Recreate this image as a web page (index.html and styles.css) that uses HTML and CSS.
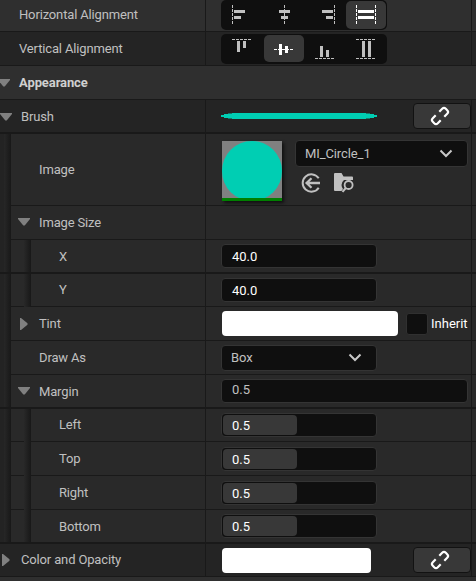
FILE: index.html
```html
<!DOCTYPE html>
<html lang="en">
<head>
<meta charset="utf-8">
<title>Details</title>
<link rel="stylesheet" href="styles.css">
</head>
<body>
<svg class="defs" width="0" height="0">
  <symbol id="link" viewBox="0 0 20 20">
    <g fill="none" stroke="#fff" stroke-width="2.200">
      <path d="M9.300 5.700 12.200 2.800Q14 1 15.800 2.800L17.200 4.200Q19 6 17.200 7.800L14.300 10.700"/>
      <path d="M10.700 14.300 7.800 17.200Q6 19 4.200 17.200L2.800 15.800Q1 14 2.800 12.200L5.700 9.300"/>
    </g>
  </symbol>
  <symbol id="chevron" viewBox="0 0 14 9">
    <path d="M1.500 1.500 7 7l5.500-5.500" fill="none" stroke="#c8c8c8" stroke-width="2"/>
  </symbol>
</svg>
<main class="details">
  <div class="row first">
    <div class="name">Horizontal Alignment</div>
    <div class="value">
      <div class="segments">
        <span class="seg"><svg width="20" height="20"><path class="dash" d="M.5 0V20"/><path d="M2 5h11v3H2zM2 11h7v3H2z"/></svg></span>
        <span class="seg"><svg width="20" height="20"><path class="dash" d="M10.500 0V20"/><path d="M5 5h11v3H5zM7 11h7v3H7z"/></svg></span>
        <span class="seg"><svg width="20" height="20"><path class="dash" d="M19.500 0V20"/><path d="M7 5h11v3H7zM11 11h7v3h-7z"/></svg></span>
        <span class="seg on"><svg width="20" height="20"><path class="dash" d="M.5 0V20M19.500 0V20"/><path d="M2 5h16v3H2zM2 11h16v3H2z"/></svg></span>
      </div>
    </div>
  </div>
  <div class="row dark">
    <div class="name">Vertical Alignment</div>
    <div class="value">
      <div class="segments">
        <span class="seg"><svg width="20" height="20"><path class="dash" d="M0 .5H20"/><path d="M5 2h3v11H5zM11 2h3v7h-3z"/></svg></span>
        <span class="seg on"><svg width="20" height="20"><path class="dash" d="M0 10.500H20"/><path d="M5 5h3v11H5zM11 7h3v7h-3z"/></svg></span>
        <span class="seg"><svg width="20" height="20"><path class="dash" d="M0 19.500H20"/><path d="M5 7h3v11H5zM11 11h3v7h-3z"/></svg></span>
        <span class="seg"><svg width="20" height="20"><path class="dash" d="M0 .5H20M0 19.500H20"/><path d="M6 2h3v16H6zM12 2h3v16h-3z"/></svg></span>
      </div>
    </div>
  </div>
  <div class="row category">
    <svg class="arrow down" width="12" height="8"><path d="M0 0h12v1L6.700 7.500H5.300L0 1z"/></svg>
    <div class="name">Appearance</div>
  </div>
  <div class="row dark thick l1">
    <svg class="arrow down" width="12" height="8"><path d="M0 0h12v1L6.700 7.500H5.300L0 1z"/></svg>
    <div class="name">Brush</div>
    <div class="value">
      <svg class="strip" width="156" height="6"><path d="M0 2H3V1H7V.5H11V0H145V.5H149V1H153V2H156V4H153V5H149V5.500H145V6H11V5.500H7V5H3V4H0z"/></svg>
      <span class="button"><svg width="20" height="20"><use href="#link"/></svg></span>
    </div>
  </div>
  <div class="row image l2">
    <i class="guide"></i>
    <div class="name">Image</div>
    <div class="value">
      <svg class="thumb" width="60" height="60"><path fill="#808080" d="M0 0h60v60H0z"/><circle cx="30" cy="30" r="30" fill="#00ceb3"/><path fill="#007f00" d="M0 57h60v3H0z"/></svg>
      <div class="asset">
        <div class="field combo wide"><span>MI_Circle_1</span><svg width="14" height="9"><use href="#chevron"/></svg></div>
        <div class="tools">
          <svg width="20" height="20"><g fill="none" stroke="#c0c0c0" stroke-width="2"><path d="M17.700 5.300A8.700 8.700 0 1 0 17.700 14.700"/><path stroke-width="2.300" d="M19 10H6M10.500 5.200 5.600 10l4.900 4.800"/></g></svg>
          <svg width="20" height="20"><path fill="#c0c0c0" d="M0 1Q0 0 1 0H7.500L9.500 3.500H18Q19 3.500 19 4.500V7H10Q7.500 9 7.500 12 7.500 14 9 16L7.500 18H1Q0 18 0 17z"/><circle cx="14.600" cy="12" r="4" fill="none" stroke="#c0c0c0" stroke-width="1.800"/><path d="M11.800 15 8.500 18.800" stroke="#c0c0c0" stroke-width="2"/></svg>
        </div>
      </div>
    </div>
  </div>
  <div class="row l2">
    <i class="guide"></i>
    <svg class="arrow down" width="12" height="8"><path d="M0 0h12v1L6.700 7.500H5.300L0 1z"/></svg>
    <div class="name">Image Size</div>
    <div class="value"></div>
  </div>
  <div class="row thick l3">
    <i class="guide"></i><i class="guide inner"></i>
    <div class="name">X</div>
    <div class="value"><div class="field num">40.0</div></div>
  </div>
  <div class="row short l3">
    <i class="guide"></i><i class="guide inner"></i>
    <div class="name">Y</div>
    <div class="value"><div class="field num">40.0</div></div>
  </div>
  <div class="row l2">
    <i class="guide"></i>
    <svg class="arrow right" width="8" height="12"><path d="M0 0h1L7.500 5.300V6.700L1 12H0z"/></svg>
    <div class="name">Tint</div>
    <div class="value"><div class="swatch tint"></div><span class="check"></span><span class="inherit">Inherit</span></div>
  </div>
  <div class="row l2">
    <i class="guide"></i>
    <div class="name">Draw As</div>
    <div class="value"><div class="field combo"><span>Box</span><svg width="14" height="9"><use href="#chevron"/></svg></div></div>
  </div>
  <div class="row thick l2">
    <i class="guide"></i>
    <svg class="arrow down" width="12" height="8"><path d="M0 0h12v1L6.700 7.500H5.300L0 1z"/></svg>
    <div class="name">Margin</div>
    <div class="value"><div class="field text">0.5</div></div>
  </div>
  <div class="row short l3">
    <i class="guide"></i><i class="guide inner"></i>
    <div class="name">Left</div>
    <div class="value"><div class="field num slider">0.5</div></div>
  </div>
  <div class="row l3">
    <i class="guide"></i><i class="guide inner"></i>
    <div class="name">Top</div>
    <div class="value"><div class="field num slider">0.5</div></div>
  </div>
  <div class="row l3">
    <i class="guide"></i><i class="guide inner"></i>
    <div class="name">Right</div>
    <div class="value"><div class="field num slider">0.5</div></div>
  </div>
  <div class="row thick l3">
    <i class="guide"></i><i class="guide inner"></i>
    <div class="name">Bottom</div>
    <div class="value"><div class="field num slider">0.5</div></div>
  </div>
  <div class="row short dark l1">
    <svg class="arrow right" width="8" height="12"><path d="M0 0h1L7.500 5.300V6.700L1 12H0z"/></svg>
    <div class="name">Color and Opacity</div>
    <div class="value"><div class="swatch color"></div><span class="button"><svg width="20" height="20"><use href="#link"/></svg></span></div>
  </div>
</main>
</body>
</html>
```
FILE: styles.css
```css
* { box-sizing: border-box; }
body {
  margin: 0;
  height: 581px;
  overflow: hidden;
  background: #2f2f2f;
  color: #c0c0c0;
  font: 13px/16px Roboto, "Liberation Sans", sans-serif;
}
.defs { position: absolute; }
svg { display: block; flex: none; }

.row {
  position: relative;
  display: grid;
  grid-template-columns: 205px 267px 4px;
  height: 34px;
  background: #292929;
  border-bottom: 1px solid #191919;
}
.row.first { height: 32px; background: #2f2f2f; }
.row.dark { background: #242424; }
.row.category { background: #2f2f2f; color: #d0d0d0; font-weight: 700; }
.row.thick { border-bottom-width: 2px; }
.row.short { height: 33px; }
.row.image { height: 72px; }

.name {
  grid-column: 1;
  grid-row: 1;
  align-self: center;
  padding-left: 19px;
  letter-spacing: -0.15px;
  white-space: nowrap;
}
.category .name { letter-spacing: -0.1px; }
.thick .name { padding-top: 2px; }
.first .name { padding-bottom: 2px; }
.l1 .name { padding-left: 21px; }
.l2 .name { padding-left: 39px; }
.l3 .name { padding-left: 59px; }
.value {
  grid-column: 2;
  grid-row: 1;
  display: flex;
  align-items: center;
  padding-left: 16px;
  border-left: 1px solid #191919;
  border-right: 1px solid #191919;
}

.guide {
  position: absolute;
  left: 0;
  top: 0;
  bottom: -1px;
  width: 11px;
  background: linear-gradient(90deg, #232323 4px, #272727 4px, #181818 11px);
}
.guide.inner { left: 24px; width: 7px; background: linear-gradient(90deg, #282828, #181818); }
.thick .guide { bottom: 0; }

.arrow { position: absolute; fill: #808080; }
.arrow.down { left: -2px; top: 13px; }
.arrow.right { left: 2px; top: 10px; }
.l1 .arrow.down { left: 0; }
.l2 .arrow.down { left: 18px; top: 12px; }
.l2 .arrow.right { left: 20px; top: 11px; }

.segments {
  display: grid;
  grid-template-columns: 42px 41px 41px 40px;
  align-items: center;
  width: 166px;
  height: 30px;
  margin-left: -1px;
  padding: 0 1px;
  border-radius: 5px;
  background: #0f0f0f;
}
.first .segments { margin-top: -1px; }
.dark .segments { margin-top: 1px; }
.seg { display: grid; place-items: center; width: 40px; height: 28px; border-radius: 5px; fill: #c0c0c0; }
.seg path { shape-rendering: crispEdges; }
.seg .dash { stroke: #c0c0c0; stroke-dasharray: 3 1; }
.seg.on { background: #383838; fill: #fff; }
.seg.on .dash { stroke: #fff; }
.dark .seg { height: 27px; margin-bottom: 1px; }
.dark .seg svg { margin-top: 1px; }

.strip { margin-left: -1px; fill: #00ceb3; }
.button {
  display: grid;
  place-items: center;
  width: 58px;
  height: 26px;
  margin-left: auto;
  padding-right: 4px;
  border: 1px solid #121212;
  border-radius: 4px;
  background: #383838;
}

.image .value { align-items: flex-start; padding-top: 7px; }
.thumb { box-shadow: 2px 2px 3px #111; }
.asset { margin: -1px 0 0 14px; }
.tools { display: flex; gap: 13px; padding: 6px 0 0 5px; }

.field {
  position: relative;
  width: 156px;
  margin-left: -1px;
  border: 1px solid #343434;
  border-radius: 4px;
  background: #0f0f0f;
  padding-left: 10px;
}
.num { height: 24px; line-height: 23px; color: #fff; }
.combo { display: flex; align-items: center; justify-content: space-between; height: 26px; padding: 0 14px 0 9px; }
.combo span { letter-spacing: -0.1px; }
.combo.wide { width: 173px; height: 27px; }
.text { width: 247px; height: 24px; line-height: 19px; }
.slider { isolation: isolate; }
.slider::before {
  content: "";
  position: absolute;
  z-index: -1;
  left: 1px;
  top: 1px;
  width: 74px;
  height: 20px;
  border-radius: 4px;
  background: #383838;
}

.swatch { height: 25px; border-radius: 4px; background: #fff; }
.tint { width: 176px; }
.color { width: 149px; }
.check { width: 22px; height: 22px; margin-left: 8px; border: 1px solid #303030; border-radius: 3px; background: #0f0f0f; }
.inherit { margin-left: 3px; color: #fff; }
```
